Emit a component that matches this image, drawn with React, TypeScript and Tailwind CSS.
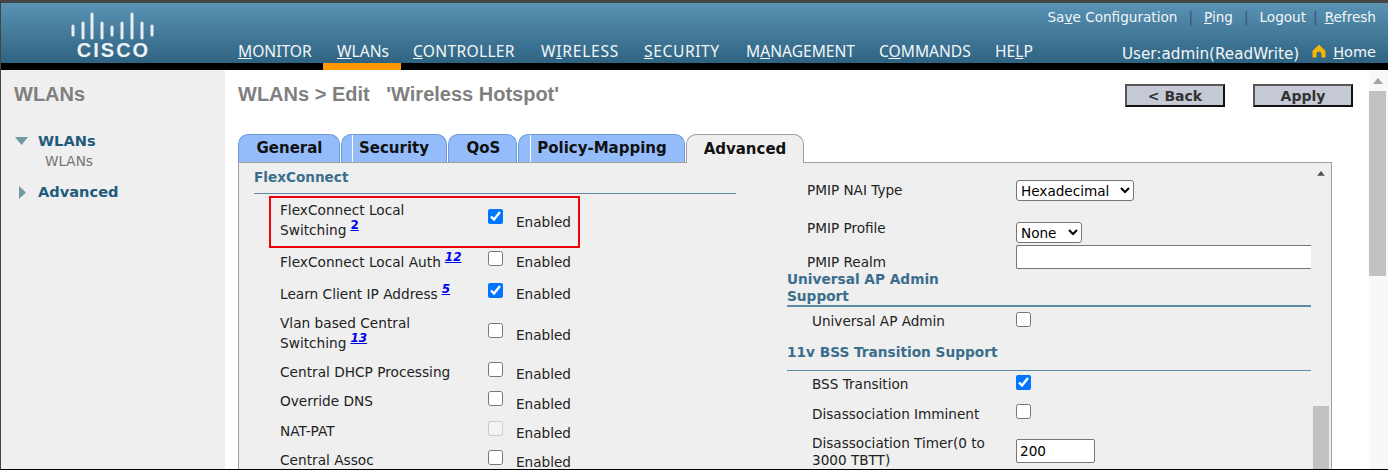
import React from "react"

const nav = [
  { pre: "", u: "M", post: "ONITOR", w: "w-[99px]" },
  { pre: "", u: "W", post: "LANs", w: "w-[76px]", active: true },
  { pre: "", u: "C", post: "ONTROLLER", w: "w-[128px] tracking-[0.3px]" },
  { pre: "W", u: "I", post: "RELESS", w: "w-[103px] tracking-[0.75px]" },
  { pre: "", u: "S", post: "ECURITY", w: "w-[102px] tracking-[0.6px]" },
  { pre: "M", u: "A", post: "NAGEMENT", w: "w-[133px]" },
  { pre: "C", u: "O", post: "MMANDS", w: "w-[116px]" },
  { pre: "HE", u: "L", post: "P", w: "w-[40px]" },
]

const tabs = [
  { name: "General", w: "w-[102px]", pad: "pl-[1px]" },
  { name: "Security", w: "w-[106px]", tick: "left-[10px]", pad: "" },
  { name: "QoS", w: "w-[69px]", pad: "pl-[2px]" },
  { name: "Policy-Mapping", w: "w-[167px]", tick: "left-[11px]", pad: "pl-[1px]" },
]

const leftRows = [
  { lines: ["FlexConnect Local", "Switching"], sup: "2", h: "h-[50px]", cb: "mt-[9px]", en: "mt-[12px]", checked: true },
  { lines: ["FlexConnect Local Auth"], sup: "12", italic: true, h: "h-[32px]", cb: "mt-[1px]", en: "mt-[2px]", lb: "mt-[2px]" },
  { lines: ["Learn Client IP Address"], sup: "5", italic: true, h: "h-[31px]", cb: "mt-[1px]", en: "mt-[2px]", lb: "mt-[2px]", checked: true },
  { lines: ["Vlan based Central", "Switching"], sup: "13", italic: true, h: "h-[49px]", cb: "mt-[10px]", en: "mt-[12px]" },
  { lines: ["Central DHCP Processing"], h: "h-[29px]", en: "mt-[2px]" },
  { lines: ["Override DNS"], h: "h-[30px]", en: "mt-[3px]" },
  { lines: ["NAT-PAT"], h: "h-[29px]", en: "mt-[2px]", disabled: true },
  { lines: ["Central Assoc"], h: "h-[20px]", en: "mt-[2px]" },
]

function Uline({ pre, u, post }: { pre: string; u: string; post: string }) {
  return (
    <span>
      {pre}
      <span className="underline">{u}</span>
      {post}
    </span>
  )
}

function Check({ checked, disabled, className }: { checked?: boolean; disabled?: boolean; className?: string }) {
  return (
    <input
      type="checkbox"
      readOnly
      checked={!!checked}
      disabled={disabled}
      className={"m-0 block h-[15px] w-[15px] shrink-0 " + (className ?? "")}
    />
  )
}

function CiscoLogo() {
  const bars = [
    [1, 24, 33],
    [11, 21, 36],
    [20, 12, 36],
    [30, 21, 36],
    [40, 25, 33],
    [50, 21, 36],
    [60, 12, 36],
    [70, 21, 36],
    [80, 24, 33],
  ]
  return (
    <svg width="84" height="38" viewBox="0 0 84 38" className="block">
      {bars.map(([x, a, b]) => (
        <line key={x} x1={x + 1} x2={x + 1} y1={a} y2={b} stroke="#e6eef3" strokeWidth="3" strokeLinecap="round" />
      ))}
    </svg>
  )
}

export default function App() {
  return (
    <div className="flex h-[470px] w-[1388px] flex-col overflow-hidden border-b border-l border-b-black border-l-[#444] font-['DejaVu_Sans',sans-serif] text-[13.6px] text-[#222]">
      {/* Header */}
      <header className="h-[70px] shrink-0 border-t-[3px] border-b-[7px] border-t-[#444] border-b-black bg-gradient-to-b from-[#5a93b4] to-[#2f6382] text-[#f2f6f8]">
        <div className="flex h-full">
          <div className="flex w-[237px] shrink-0 flex-col items-center">
            <div className="-mt-[1px] w-[84px] translate-x-[-7px]">
              <CiscoLogo />
            </div>
            <span className="mt-[1px] translate-x-[-6px] font-['Liberation_Sans',sans-serif] text-[20px] leading-[18px] font-bold tracking-[2px] text-[#eef3f6]">
              CISCO
            </span>
          </div>
          <nav className="flex flex-1 items-start pt-[38px] font-['Noto_Sans',sans-serif] text-[15.6px] leading-[20px]">
            {nav.map((n) => (
              <span key={n.u + n.post} className={n.w + " relative shrink-0 whitespace-nowrap"}>
                <Uline pre={n.pre} u={n.u} post={n.post} />
                {n.active && <span className="absolute top-[22px] -left-[14px] h-[7px] w-[78px] bg-[#ff9900]" />}
              </span>
            ))}
          </nav>
          <div className="flex w-[340px] shrink-0 flex-col items-end pr-[12px] text-[13.6px] whitespace-nowrap">
            <div className="flex h-[22px] items-center gap-[11px] pt-[6px]">
              <span>
                Sa<span className="underline">v</span>e Configuration
              </span>
              <span className="text-[#3d4f80]">|</span>
              <span>
                <span className="underline">P</span>ing
              </span>
              <span className="text-[#3d4f80]">|</span>
              <span>Logout</span>
              <span className="-mx-[4px] text-[#3d4f80]">|</span>
              <span>
                <span className="underline">R</span>efresh
              </span>
            </div>
            <div className="mt-[17px] flex h-[22px] items-start gap-[13px]">
              <span className="mt-[1px] text-[15.2px]">User:admin(ReadWrite)</span>
              <span className="flex items-center gap-[7px] text-[14.5px]">
                <svg width="14" height="14" viewBox="0 0 14 14" className="-mt-[3px]">
                  <path d="M7 0.5 L13.5 7 V13.5 H9.5 V10 a2.5 2.5 0 0 0 -5 0 V13.5 H0.5 V7 Z" fill="#f5b800" />
                </svg>
                <span>
                  <span className="underline">H</span>ome
                </span>
              </span>
            </div>
          </div>
        </div>
      </header>

      <div className="flex min-h-0 flex-1">
        {/* Sidebar */}
        <aside className="w-[224px] shrink-0 bg-[#efefef] pl-[13px]">
          <h2 className="mt-[13px] font-['Liberation_Sans',sans-serif] text-[20px] leading-[23px] font-bold text-[#7f7f7f]">WLANs</h2>
          <div className="mt-[25px] flex items-center gap-[10px] pl-[1px]">
            <svg width="13" height="8" viewBox="0 0 13 8">
              <path d="M0 0H13L6.5 8Z" fill="#6f9a9f" />
            </svg>
            <span className="text-[14.6px] leading-[20px] font-bold text-[#1f5c7c]">WLANs</span>
          </div>
          <div className="pl-[31px] text-[13.6px] leading-[20px] text-[#737373]">WLANs</div>
          <div className="mt-[11px] flex items-center gap-[12px] pl-[5px]">
            <svg width="7" height="13" viewBox="0 0 7 13">
              <path d="M0 0L7 6.5L0 13Z" fill="#6f9a9f" />
            </svg>
            <span className="text-[14.6px] leading-[20px] font-bold text-[#1f5c7c]">Advanced</span>
          </div>
        </aside>

        {/* Main */}
        <main className="flex min-w-0 flex-1">
          <div className="min-w-0 flex-1 pl-[13px]">
            <div className="flex h-[64px] items-start justify-between pr-[16px]">
              <h1 className="mt-[13px] font-['Liberation_Sans',sans-serif] text-[20px] leading-[23px] font-bold whitespace-pre text-[#7f7f7f]">
                {"WLANs > Edit   'Wireless Hotspot'"}
              </h1>
              <div className="mt-[14px] flex gap-[28px]">
                <button className="h-[23px] w-[100px] border-2 border-t-[#555] border-r-[#111] border-b-[#111] border-l-[#555] bg-[#c6c9d6] text-[14px] leading-[18px] font-bold text-[#333]">
                  &lt; Back
                </button>
                <button className="h-[23px] w-[100px] border-2 border-t-[#555] border-r-[#111] border-b-[#111] border-l-[#555] bg-[#c6c9d6] text-[14px] leading-[18px] font-bold text-[#333]">
                  Apply
                </button>
              </div>
            </div>

            {/* Tabs */}
            <div className="flex h-[28px] w-[1094px] items-end">
              {tabs.map((t) => (
                <div
                  key={t.name}
                  className={t.w + " " + t.pad + " relative mr-[1px] flex h-[28px] items-center justify-center rounded-t-[10px] border border-b-0 border-[#6e9bd8] bg-[#94bcfb] text-[15px] font-bold text-[#111]"}
                >
                  {t.tick && <span className={t.tick + " absolute top-0 bottom-0 w-px bg-white"} />}
                  {t.name}
                </div>
              ))}
              <div className="relative z-10 -mb-px flex h-[29px] w-[118px] items-center justify-center rounded-t-[10px] border border-b-0 border-[#a0a0a0] bg-[#efefef] text-[15px] font-bold text-[#111]">
                Advanced
              </div>
            </div>

            {/* Panel */}
            <div className="relative flex h-[400px] w-[1094px] border border-b-0 border-[#a0a0a0] bg-[#efefef]">
              <div className="w-[548px] shrink-0 pl-[15px]">
                <div className="h-[31px] w-[482px] border-b border-[#5e8ca6] pt-[4px] text-[13.6px] leading-[20px] font-bold text-[#3b6d8c]">FlexConnect</div>
                <div className="pl-[16px]">
                  <div className="mt-[6px]">
                    {leftRows.map((r, i) => (
                      <div key={i} className={r.h + " relative flex"}>
                        {i === 0 && <span className="absolute -top-[4px] -left-[1px] h-[52px] w-[311px] border-2 border-[#f00000]" />}
                        <div className={"w-[218px] pl-[10px] text-[13.7px] leading-[20px] " + (r.lb ?? "")}>
                          {r.lines.map((l, j) => (
                            <div key={j} className="whitespace-nowrap">
                              {l}
                              {r.sup && j === r.lines.length - 1 && (
                                <sup className={"ml-[4px] text-[12px] leading-none font-bold text-[#0000ee] underline" + (r.italic ? " italic" : "")}>{r.sup}</sup>
                              )}
                            </div>
                          ))}
                        </div>
                        <Check checked={r.checked} disabled={r.disabled} className={r.cb} />
                        <span className={"ml-[13px] leading-[20px] " + (r.en ?? "")}>Enabled</span>
                      </div>
                    ))}
                  </div>
                </div>
              </div>

              <div className="w-[524px] shrink-0 leading-[20px]">
                <div className="flex h-[41px] pt-[17px] pl-[20px]">
                  <span className="w-[209px]">PMIP NAI Type</span>
                  <select defaultValue="Hexadecimal" className="h-[21px] w-[118px] rounded-[3px] border border-[#767676] bg-white text-[13.6px] text-black">
                    <option>Hexadecimal</option>
                  </select>
                </div>
                <div className="flex h-[41px] pl-[20px]">
                  <span className="mt-[14px] w-[209px]">PMIP Profile</span>
                  <select defaultValue="None" className="mt-[18px] h-[21px] w-[66px] rounded-[3px] border border-[#767676] bg-white text-[13.6px] text-black">
                    <option>None</option>
                  </select>
                </div>
                <div className="flex h-[24px] pl-[20px]">
                  <span className="mt-[7px] w-[209px]">PMIP Realm</span>
                  <input readOnly className="h-[24px] w-[295px] rounded-l-[2px] border border-r-0 border-[#767676] bg-white" />
                </div>
                <div className="w-[524px] border-b-2 border-[#5e8ca6] pt-[2px] text-[13.7px] leading-[17px] font-bold text-[#3b6d8c]">
                  Universal AP Admin
                  <br />
                  Support
                </div>
                <div className="flex h-[34px] items-start pl-[25px]">
                  <span className="mt-[4px] w-[204px]">Universal AP Admin</span>
                  <Check className="mt-[5px]" />
                </div>
                <div className="h-[30px] border-b border-[#5e8ca6] pt-[1px] text-[13.7px] leading-[20px] font-bold text-[#3b6d8c]">11v BSS Transition Support</div>
                <div className="flex h-[30px] items-start pl-[25px]">
                  <span className="mt-[3px] w-[204px]">BSS Transition</span>
                  <Check checked className="mt-[4px]" />
                </div>
                <div className="flex h-[29px] items-start pl-[25px]">
                  <span className="mt-[3px] w-[204px]">Disassociation Imminent</span>
                  <Check className="mt-[3px]" />
                </div>
                <div className="flex items-start pl-[25px]">
                  <span className="mt-[5px] w-[204px] leading-[17px]">
                    Disassociation Timer(0 to
                    <br />
                    3000 TBTT)
                  </span>
                  <input readOnly value="200" className="mt-[9px] h-[24px] w-[79px] rounded-[2px] border border-[#767676] bg-white px-[3px] text-[13.6px] text-black" />
                </div>
              </div>

              {/* panel scrollbar */}
              <div className="flex w-[20px] shrink-0 flex-col items-center">
                <svg width="10" height="6" viewBox="0 0 10 6" className="mt-[8px]">
                  <path d="M5 0L10 6H0Z" fill="#505050" />
                </svg>
                <div className="mt-[230px] h-[200px] w-[16px] bg-[#c1c1c1]" />
              </div>
            </div>
          </div>

          {/* page scrollbar */}
          <div className="flex w-[19px] shrink-0 flex-col items-center bg-[#f8f8f8] pr-[2px]">
            <svg width="10" height="6" viewBox="0 0 10 6" className="mt-[8px]">
              <path d="M5 0L10 6H0Z" fill="#a3a3a3" />
            </svg>
            <div className="mt-[7px] h-[185px] w-[17px] bg-[#c1c1c1]" />
          </div>
        </main>
      </div>
    </div>
  )
}
